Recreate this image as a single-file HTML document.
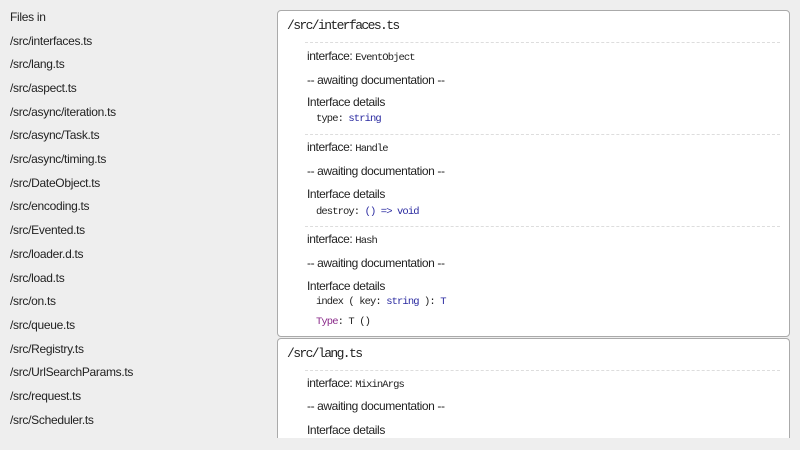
<!DOCTYPE html>
<html><head><style>
body{margin:0;width:800px;height:450px;background:#eeeeee;font-family:"Liberation Sans",sans-serif;color:#222;position:relative;overflow:hidden}
.a{position:absolute;white-space:nowrap;line-height:14px}
.s{font-size:12px;left:10px;letter-spacing:-0.3px}
.t{font-size:12px;left:307px;letter-spacing:-0.4px}
.m{font-family:"Liberation Mono",monospace;font-size:10.5px;letter-spacing:-0.9px}
.h{font-family:"Liberation Mono",monospace;font-size:13px;left:287px;letter-spacing:-1.6px}
.c{position:absolute;left:277px;width:511px;background:#fff;border:1px solid #aaa;border-radius:4px}
.d{position:absolute;left:305px;width:475px;border-top:1px dashed #ddd;height:0}
.b{color:#2a2aa0}.p{color:#8a2a8a}
</style></head><body>
<div class="a s" style="top:10px">Files in</div>
<div class="a s" style="top:34px">/src/interfaces.ts</div>
<div class="a s" style="top:57px">/src/lang.ts</div>
<div class="a s" style="top:81px">/src/aspect.ts</div>
<div class="a s" style="top:105px">/src/async/iteration.ts</div>
<div class="a s" style="top:128px">/src/async/Task.ts</div>
<div class="a s" style="top:152px">/src/async/timing.ts</div>
<div class="a s" style="top:176px">/src/DateObject.ts</div>
<div class="a s" style="top:199px">/src/encoding.ts</div>
<div class="a s" style="top:223px">/src/Evented.ts</div>
<div class="a s" style="top:247px">/src/loader.d.ts</div>
<div class="a s" style="top:271px">/src/load.ts</div>
<div class="a s" style="top:294px">/src/on.ts</div>
<div class="a s" style="top:318px">/src/queue.ts</div>
<div class="a s" style="top:342px">/src/Registry.ts</div>
<div class="a s" style="top:365px">/src/UrlSearchParams.ts</div>
<div class="a s" style="top:389px">/src/request.ts</div>
<div class="a s" style="top:413px">/src/Scheduler.ts</div>

<div class="c" style="top:10px;height:325px"></div>
<div class="c" style="top:338px;height:110px;border-bottom:none"></div>
<div style="position:absolute;left:277px;top:438px;width:514px;height:12px;background:#eeeeee"></div>

<div class="a h" style="top:19px">/src/interfaces.ts</div>
<div class="d" style="top:42px"></div>
<div class="a t" style="top:49px">interface: <span class="m">EventObject</span></div>
<div class="a t" style="top:73px">-- awaiting documentation --</div>
<div class="a t" style="top:95px">Interface details</div>
<div class="a t m" style="top:112px;left:316px">type: <span class="b">string</span></div>
<div class="d" style="top:134px"></div>
<div class="a t" style="top:140px">interface: <span class="m">Handle</span></div>
<div class="a t" style="top:164px">-- awaiting documentation --</div>
<div class="a t" style="top:187px">Interface details</div>
<div class="a t m" style="top:205px;left:316px">destroy: <span class="b">() =&gt; void</span></div>
<div class="d" style="top:226px"></div>
<div class="a t" style="top:232px">interface: <span class="m">Hash</span></div>
<div class="a t" style="top:256px">-- awaiting documentation --</div>
<div class="a t" style="top:279px">Interface details</div>
<div class="a t m" style="top:295px;left:316px">index ( key: <span class="b">string</span> ): <span class="b">T</span></div>
<div class="a t m" style="top:315px;left:316px"><span class="p">Type</span>: T ()</div>

<div class="a h" style="top:347px">/src/lang.ts</div>
<div class="d" style="top:370px"></div>
<div class="a t" style="top:376px">interface: <span class="m">MixinArgs</span></div>
<div class="a t" style="top:399px">-- awaiting documentation --</div>
<div class="a t" style="top:423px">Interface details</div>
</body></html>
